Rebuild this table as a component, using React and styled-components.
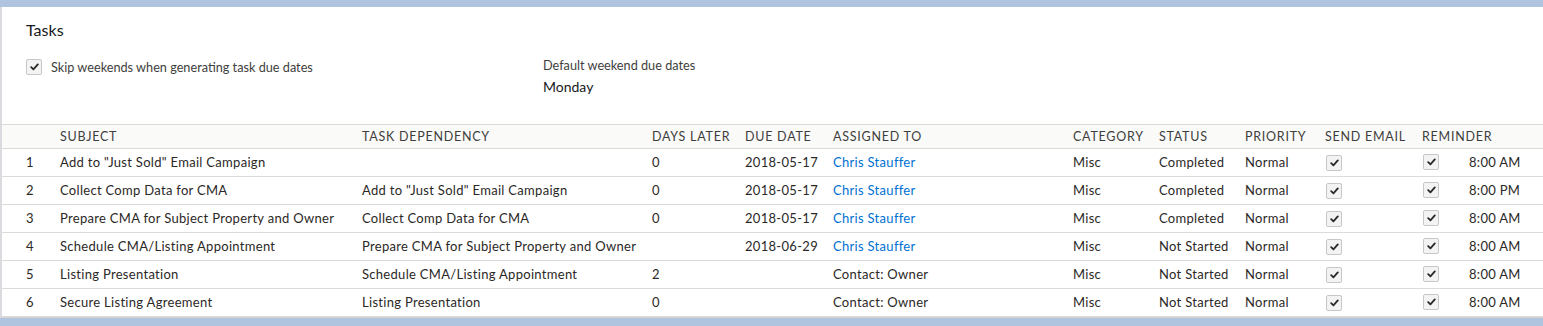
import React from "react";
import styled, { createGlobalStyle } from "styled-components";

const Global = createGlobalStyle`
  html, body { margin: 0; padding: 0; }
  body {
    background: #b0c4df;
    font-family: Lato, "Open Sans", Arial, sans-serif;
    color: #2b2826;
    overflow: hidden;
  }
`;

const Page = styled.div`
  padding-top: 7px;
  width: 1543px;
  height: 326px;
  box-sizing: border-box;
`;

const Card = styled.section`
  background: #fff;
  border-left: 2px solid #d9dbdf;
  border-bottom: 1px solid #d4d4d4;
  width: 1600px;
`;

const Top = styled.div`
  padding: 13px 0 0 24px;
  height: 117px;
  box-sizing: border-box;
`;

const Title = styled.h2`
  margin: 0;
  font-size: 16px;
  font-weight: 400;
  line-height: 20px;
  color: #16191c;
`;

const Settings = styled.div`
  display: grid;
  grid-template-columns: 517px auto;
  margin-top: 16px;
`;

const CheckRow = styled.label`
  display: flex;
  align-items: center;
  gap: 9px;
  height: 18px;
  margin-top: 2px;
  font-size: 12.7px;
  color: #3e3e3c;
`;

const Box = styled.span`
  display: inline-flex;
  align-items: center;
  justify-content: center;
  width: 14px;
  height: 14px;
  border: 1px solid #c9c7c5;
  border-radius: 2px;
  background: #f3f3f3;
  flex: none;
`;

const Field = styled.div`
  display: flex;
  flex-direction: column;
`;

const FieldLabel = styled.span`
  font-size: 12.7px;
  line-height: 18px;
  color: #3e3e3c;
`;

const FieldValue = styled.span`
  font-size: 14px;
  line-height: 20px;
  margin-top: 3px;
  color: #16191c;
`;

const Table = styled.table`
  border-collapse: collapse;
  table-layout: fixed;
  width: 1600px;
  font-size: 13px;
`;

const Th = styled.th`
  background: #fafaf9;
  border-top: 1px solid #dddbda;
  border-bottom: 1px solid #dddbda;
  height: 23px;
  padding: 0 0 0 ${(p) => p.$pl || 0}px;
  text-align: left;
  font-weight: 400;
  font-size: 12.5px;
  letter-spacing: 0.06em;
  text-transform: uppercase;
  color: #3e3e3c;
  white-space: nowrap;
`;

const Td = styled.td`
  border-bottom: 1px solid #dddbda;
  height: 26px;
  padding: 0 0 1px ${(p) => p.$pl || 0}px;
  color: #2b2826;
  letter-spacing: 0.3px;
  white-space: nowrap;
  vertical-align: middle;
`;

const Link = styled.a`
  color: #0070d2;
  text-decoration: none;
`;

const Reminder = styled.div`
  display: flex;
  align-items: center;
  gap: 30px;
`;

const Check = () => (
  <Box>
    <svg width="9" height="8" viewBox="0 0 9 8">
      <path d="M1.2 4.2 L3.4 6.3 L7.8 1.4" fill="none" stroke="#2b2826" strokeWidth="1.8" strokeLinecap="round" strokeLinejoin="round" />
    </svg>
  </Box>
);

const rows = [
  ["Add to \"Just Sold\" Email Campaign", "", "0", "2018-05-17", "Chris Stauffer", true, "Completed", "8:00 AM"],
  ["Collect Comp Data for CMA", "Add to \"Just Sold\" Email Campaign", "0", "2018-05-17", "Chris Stauffer", true, "Completed", "8:00 PM"],
  ["Prepare CMA for Subject Property and Owner", "Collect Comp Data for CMA", "0", "2018-05-17", "Chris Stauffer", true, "Completed", "8:00 AM"],
  ["Schedule CMA/Listing Appointment", "Prepare CMA for Subject Property and Owner", "", "2018-06-29", "Chris Stauffer", true, "Not Started", "8:00 AM"],
  ["Listing Presentation", "Schedule CMA/Listing Appointment", "2", "", "Contact: Owner", false, "Not Started", "8:00 AM"],
  ["Secure Listing Agreement", "Listing Presentation", "0", "", "Contact: Owner", false, "Not Started", "8:00 AM"],
];

const cols = [58, 302, 290, 93, 88, 240, 86, 86, 80, 97, 180];

export default function App() {
  return (
    <Page>
      <Global />
      <Card>
        <Top>
          <Title>Tasks</Title>
          <Settings>
            <CheckRow>
              <Check />
              Skip weekends when generating task due dates
            </CheckRow>
            <Field>
              <FieldLabel>Default weekend due dates</FieldLabel>
              <FieldValue>Monday</FieldValue>
            </Field>
          </Settings>
        </Top>
        <Table>
          <colgroup>
            {cols.map((w, i) => (
              <col key={i} style={{ width: w }} />
            ))}
          </colgroup>
          <thead>
            <tr>
              <Th $pl={24}></Th>
              <Th>Subject</Th>
              <Th>Task Dependency</Th>
              <Th>Days Later</Th>
              <Th>Due Date</Th>
              <Th>Assigned To</Th>
              <Th>Category</Th>
              <Th>Status</Th>
              <Th>Priority</Th>
              <Th>Send Email</Th>
              <Th>Reminder</Th>
            </tr>
          </thead>
          <tbody>
            {rows.map((r, i) => (
              <tr key={i}>
                <Td $pl={24}>{i + 1}</Td>
                <Td>{r[0]}</Td>
                <Td>{r[1]}</Td>
                <Td>{r[2]}</Td>
                <Td>{r[3]}</Td>
                <Td>{r[5] ? <Link href="#">{r[4]}</Link> : r[4]}</Td>
                <Td>Misc</Td>
                <Td>{r[6]}</Td>
                <Td>Normal</Td>
                <Td $pl={1}><Check /></Td>
                <Td $pl={1}>
                  <Reminder>
                    <Check />
                    <span>{r[7]}</span>
                  </Reminder>
                </Td>
              </tr>
            ))}
          </tbody>
        </Table>
      </Card>
    </Page>
  );
}
